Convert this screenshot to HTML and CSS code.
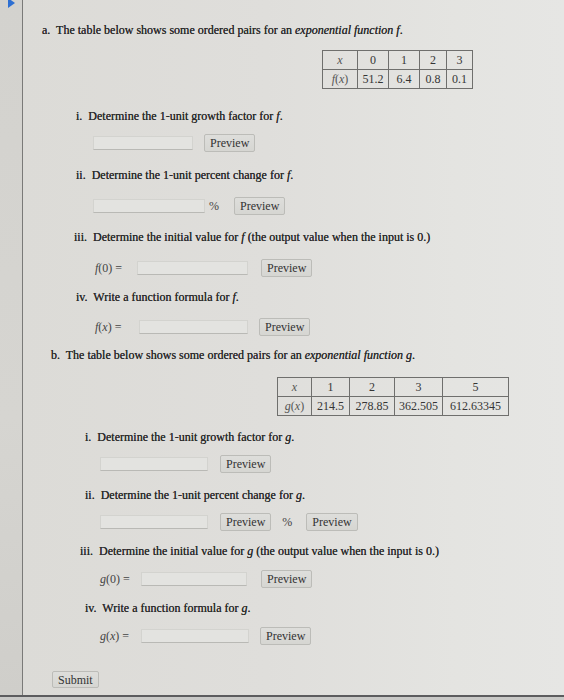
FILE: index.html
```html
<!DOCTYPE html>
<html>
<head>
<meta charset="utf-8">
<link rel="stylesheet" href="styles.css">
</head>
<body>
<div class="page">
  <div class="gutter">
    <svg class="marker" width="20" height="12" viewBox="0 0 20 12"><polygon points="8,-2 15,3 8,8" fill="#2d6fd2"/></svg>
  </div>
  <div class="content">
    <p class="txt part-a r1">a.&nbsp; The table below shows some ordered pairs for an <i>exponential function f</i>.</p>
    <table class="tbl tbl-f">
      <tr><td class="hd"><i>x</i></td><td>0</td><td>1</td><td>2</td><td>3</td></tr>
      <tr><td class="hd"><i>f</i>(<i>x</i>)</td><td>51.2</td><td>6.4</td><td>0.8</td><td>0.1</td></tr>
    </table>

    <p class="txt qa m19">i.&nbsp; Determine the 1-unit growth factor for <i>f</i>.</p>
    <div class="ctrl ca m10">
      <span class="inp w100"></span><span class="btn g11">Preview</span>
    </div>

    <p class="txt qa m15">ii.&nbsp; Determine the 1-unit percent change for <i>f</i>.</p>
    <div class="ctrl ca m14">
      <span class="inp w112"></span><span class="pct">%</span><span class="btn">Preview</span>
    </div>

    <p class="txt qa m14 q3">iii.&nbsp; Determine the initial value for <i>f</i> (the output value when the input is 0.)</p>
    <div class="ctrl ca m14">
      <span class="lbl"><i>f</i>(0) =</span><span class="inp w111"></span><span class="btn g13">Preview</span>
    </div>

    <p class="txt qa m12">iv.&nbsp; Write a function formula for <i>f</i>.</p>
    <div class="ctrl ca m13">
      <span class="lbl lbl2"><i>f</i>(<i>x</i>) =</span><span class="inp w109"></span><span class="btn g11">Preview</span>
    </div>

    <p class="txt part-b m11">b.&nbsp; The table below shows some ordered pairs for an <i>exponential function g</i>.</p>
    <table class="tbl tbl-g">
      <tr><td class="hd"><i>x</i></td><td>1</td><td>2</td><td>3</td><td>5</td></tr>
      <tr><td class="hd"><i>g</i>(<i>x</i>)</td><td>214.5</td><td>278.85</td><td>362.505</td><td>612.63345</td></tr>
    </table>

    <p class="txt qb m13">i.&nbsp; Determine the 1-unit growth factor for <i>g</i>.</p>
    <div class="ctrl cb m10">
      <span class="inp w108"></span><span class="btn g12">Preview</span>
    </div>

    <p class="txt qb m14">ii.&nbsp; Determine the 1-unit percent change for <i>g</i>.</p>
    <div class="ctrl cb m10">
      <span class="inp w108"></span><span class="btn g12">Preview</span><span class="pct pct2">%</span><span class="btn">Preview</span>
    </div>

    <p class="txt qb m12 q3b">iii.&nbsp; Determine the initial value for <i>g</i> (the output value when the input is 0.)</p>
    <div class="ctrl cb m11">
      <span class="lbl lbl3"><i>g</i>(0) =</span><span class="inp w106"></span><span class="btn g14">Preview</span>
    </div>

    <p class="txt qb m12">iv.&nbsp; Write a function formula for <i>g</i>.</p>
    <div class="ctrl cb m11">
      <span class="lbl lbl3"><i>g</i>(<i>x</i>) =</span><span class="inp w108"></span><span class="btn g11">Preview</span>
    </div>

    <div class="submit-row">
      <span class="btn submit">Submit</span>
    </div>
  </div>
</div>
</body>
</html>
```
FILE: styles.css
```css
html, body {
  margin: 0;
  padding: 0;
}
body {
  width: 564px;
  height: 700px;
  overflow: hidden;
  background: #c9c9c7;
  font-family: "Liberation Serif", "Times New Roman", serif;
  color: #2c2c2c;
}
.page {
  display: flex;
  height: 695px;
  border-bottom: 2px solid #5c5c5e;
}
.gutter {
  width: 22px;
  flex: none;
  background: linear-gradient(180deg, #d3d2ce 0%, #d6d5d1 60%, #cfceca 100%);
  border-right: 1px solid #7a7a78;
  position: relative;
}
.marker {
  position: absolute;
  left: 0;
  top: 0;
}
.content {
  flex: 1;
  padding-top: 22px;
  background: linear-gradient(90deg, #dcdbd7 0%, #dfdedb 45%, #e4e4e1 80%, #e6e6e4 100%);
}
.txt {
  margin: 0;
  font-size: 12px;
  line-height: 16px;
  white-space: nowrap;
  text-shadow: 0 0 0.4px #2c2c2c;
}
.part-a { padding-left: 19px; }
.part-b { padding-left: 28px; }
.qa { padding-left: 53px; }
.qb { padding-left: 62px; }
.q3 { padding-left: 51px; }
.q3b { padding-left: 57px; }

.m10 { margin-top: 10px; }
.m11 { margin-top: 11px; }
.m12 { margin-top: 12px; }
.m13 { margin-top: 13px; }
.m14 { margin-top: 14px; }
.m15 { margin-top: 15px; }
.m19 { margin-top: 19px; }

.tbl {
  border-collapse: collapse;
  font-size: 12px;
  color: #353535;
  margin-top: 12px;
}
.tbl td {
  border: 1px solid #6f6f6d;
  height: 18px;
  padding: 0;
  text-align: center;
  white-space: nowrap;
}
.tbl td.hd { color: #555; }
.tbl-f { margin-left: 299px; }
.tbl-f td:nth-child(1) { width: 34px; }
.tbl-f td:nth-child(2) { width: 30px; }
.tbl-f td:nth-child(3) { width: 30px; }
.tbl-f td:nth-child(4) { width: 26px; }
.tbl-f td:nth-child(5) { width: 25px; }
.tbl-g { margin-left: 254px; margin-top: 14px; }
.tbl-g td { height: 18px; }
.tbl-g td:nth-child(1) { width: 33px; }
.tbl-g td:nth-child(2) { width: 37px; }
.tbl-g td:nth-child(3) { width: 44px; }
.tbl-g td:nth-child(4) { width: 47px; }
.tbl-g td:nth-child(5) { width: 65px; }

.ctrl {
  display: flex;
  align-items: center;
  height: 18px;
  font-size: 12px;
}
.ca { padding-left: 70px; }
.cb { padding-left: 77px; }
.inp {
  height: 14px;
  background: #e3e3e0;
  border: 1px solid #d3d3cf;
  border-bottom-color: #b9b9b5;
  box-sizing: border-box;
}
.w100 { width: 100px; }
.w106 { width: 106px; }
.w108 { width: 108px; }
.w109 { width: 109px; }
.w111 { width: 111px; }
.w112 { width: 112px; }
.btn {
  height: 18px;
  box-sizing: border-box;
  padding: 0 5px;
  line-height: 16px;
  font-size: 12px;
  background: linear-gradient(180deg, #dededb 0%, #d6d6d2 100%);
  border: 1px solid #bcbcb8;
  border-radius: 2px;
  color: #333;
  white-space: nowrap;
}
.g11 { margin-left: 11px; }
.g12 { margin-left: 12px; }
.g13 { margin-left: 13px; }
.g14 { margin-left: 14px; }
.pct {
  margin-left: 4px;
  margin-right: 15px;
  color: #444;
}
.pct2 { margin-left: 11px; margin-right: 14px; }
.lbl {
  width: 42px;
  color: #444;
}
.lbl2 { width: 44px; margin-left: 1px; }
.lbl3 { width: 41px; margin-left: 0; }
.ca .lbl { margin-left: 2px; }
.submit-row {
  margin-top: 26px;
  padding-left: 29px;
  display: flex;
}
.submit {
  height: 17px;
  padding: 0 5px;
}
```
